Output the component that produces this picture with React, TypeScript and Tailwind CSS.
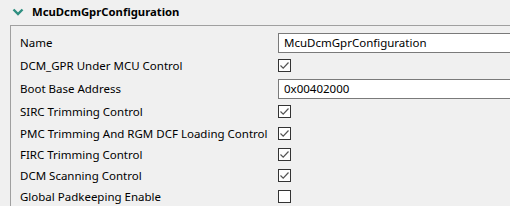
function Chevron() {
  return (
    <svg width="12" height="8" viewBox="0 0 12 8" className="shrink-0">
      <path d="M1.5 1.5 L6 6 L10.5 1.5" fill="none" stroke="#2f8f80" strokeWidth="2.4" />
    </svg>
  )
}

function Check({ checked }: { checked: boolean }) {
  return (
    <div className="flex h-[13px] w-[13px] items-center justify-center border border-[#333333] bg-white">
      {checked && (
        <svg width="11" height="11" viewBox="0 0 11 11">
          <path d="M1.5 5.5 L4.2 8.2 L9.5 2.5" fill="none" stroke="#555555" strokeWidth="1.2" />
        </svg>
      )}
    </div>
  )
}

type Row = {
  label: string
  h: string
  text?: string
  checked?: boolean
}

const rows: Row[] = [
  { label: "Name", h: "h-[22px]", text: "McuDcmGprConfiguration" },
  { label: "DCM_GPR Under MCU Control", h: "h-[23px]", checked: true },
  { label: "Boot Base Address", h: "h-[23px]", text: "0x00402000" },
  { label: "SIRC Trimming Control", h: "h-[23px]", checked: true },
  { label: "PMC Trimming And RGM DCF Loading Control", h: "h-[21px]", checked: true },
  { label: "FIRC Trimming Control", h: "h-[21px]", checked: true },
  { label: "DCM Scanning Control", h: "h-[21px]", checked: true },
  { label: "Global Padkeeping Enable", h: "h-[21px]", checked: false },
]

export default function App() {
  return (
    <div className="h-[206px] w-[510px] overflow-hidden bg-[#f0f0f0] font-['Noto_Sans',sans-serif] text-[11.5px] text-black">
      <div className="flex h-[25px] items-center gap-[8px] pl-[12px] pb-[1px]">
        <Chevron />
        <span className="text-[11.3px] font-bold">McuDcmGprConfiguration</span>
      </div>
      <div className="ml-[10px] border-t border-l border-[#a0a0a0] pt-[6px]">
        {rows.map((r) => (
          <div key={r.label} className={`flex items-center ${r.h}`}>
            <div className="w-[267px] shrink-0 pl-[9px] leading-none whitespace-nowrap">{r.label}</div>
            {r.text !== undefined ? (
              <div className="flex h-[20px] w-[260px] shrink-0 items-center border border-[#7a7a7a] bg-white pl-[5px] leading-none">
                {r.text}
              </div>
            ) : (
              <Check checked={!!r.checked} />
            )}
          </div>
        ))}
      </div>
    </div>
  )
}
